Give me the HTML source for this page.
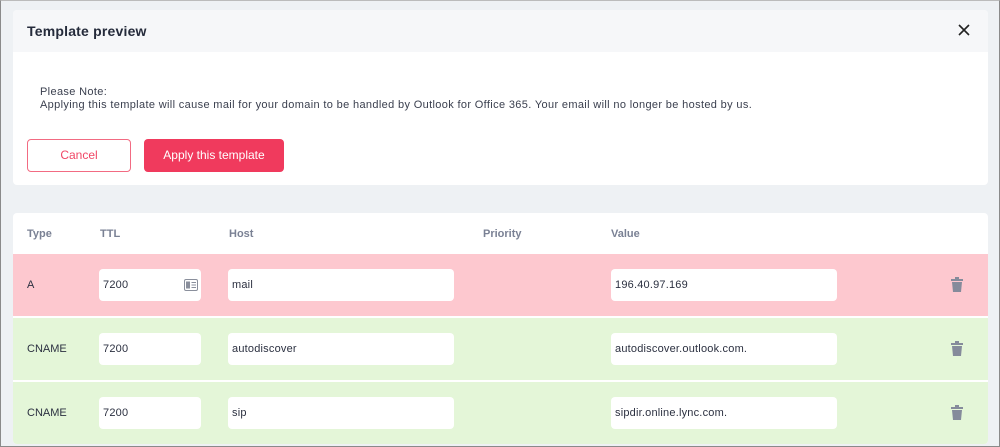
<!DOCTYPE html>
<html><head><style>
*{margin:0;padding:0;box-sizing:border-box}
html,body{width:1000px;height:447px;overflow:hidden}
body{background:#eef1f4;font-family:"Liberation Sans",sans-serif;position:relative;color:#2b3040}
.frame{position:absolute;left:0;top:0;width:1000px;height:447px;border:1px solid #8a8a8a;border-top-color:#bbb;z-index:5;pointer-events:none}
.abs{position:absolute}
.card1{left:13px;top:10px;width:975px;height:175px;background:#fff;border-radius:4px;overflow:hidden}
.hdr{height:42px;background:#f6f7f9;padding:13px 14px;font-weight:bold;font-size:14px;color:#252b3b;letter-spacing:.2px}
.note{position:absolute;left:40px;top:86px;font-size:11px;line-height:13px;color:#3a3f4e;letter-spacing:.35px}
.btn{position:absolute;top:139px;height:33px;border-radius:4px;font-size:12px;text-align:center;line-height:31px}
.card2{left:13px;top:213px;width:975px;height:231px;background:#fff;border-radius:4px;overflow:hidden}
.th{position:absolute;top:15px;font-size:11px;font-weight:bold;color:#7a8194}
.row{position:absolute;left:0;width:975px;height:62px}
.inp{position:absolute;top:15px;height:32px;background:#fff;border-radius:4px;font-size:11px;padding-left:4px;line-height:32px;color:#2b3040;letter-spacing:.2px}
.t{position:absolute;top:25px;left:14px;font-size:11px;color:#2b3040}
.tr{position:absolute;left:938px;top:23px}
</style></head><body>
<div class="frame"></div>
<div class="abs card1">
<div class="hdr">Template preview</div>
<svg class="abs" style="left:945px;top:14px" width="12" height="12" viewBox="0 0 12 12"><path d="M1 1L11 11M11 1L1 11" stroke="#222" stroke-width="1.6"/></svg>
</div>
<div class="note">Please Note:<br>Applying this template will cause mail for your domain to be handled by Outlook for Office 365. Your email will no longer be hosted by us.</div>
<div class="btn" style="left:27px;width:104px;border:1px solid #f26b82;color:#f04766;background:#fff">Cancel</div>
<div class="btn" style="left:144px;width:140px;background:#f03a5d;color:#fff;line-height:33px">Apply this template</div>
<div class="abs card2">
<div class="th" style="left:14px">Type</div>
<div class="th" style="left:87px">TTL</div>
<div class="th" style="left:216px">Host</div>
<div class="th" style="left:470px">Priority</div>
<div class="th" style="left:598px">Value</div>
<div class="row" style="top:41px;background:#fdc8cf">
<div class="t">A</div>
<div class="inp" style="left:86px;width:102px">7200
<svg class="abs" style="left:85px;top:10px" width="14" height="12" viewBox="0 0 14 12"><rect x="0.5" y="0.5" width="13" height="11" rx="1.5" fill="none" stroke="#8a8f9c"/><rect x="2" y="2.5" width="4" height="7" fill="#8a8f9c"/><path d="M7.5 3.5h4.5M7.5 6h4.5M7.5 8.5h4.5" stroke="#8a8f9c"/></svg></div>
<div class="inp" style="left:215px;width:226px">mail</div>
<div class="inp" style="left:598px;width:226px">196.40.97.169</div>
<svg class="tr" width="12" height="15" viewBox="0 0 12 15"><rect x="0" y="2" width="12" height="2" fill="#858b9b"/><rect x="4" y="0" width="4" height="2" fill="#858b9b"/><path d="M1 5h10l-1 10H2z" fill="#858b9b"/></svg>
</div>
<div class="row" style="top:105px;background:#e4f6d8">
<div class="t">CNAME</div>
<div class="inp" style="left:86px;width:102px">7200</div>
<div class="inp" style="left:215px;width:226px">autodiscover</div>
<div class="inp" style="left:598px;width:226px">autodiscover.outlook.com.</div>
<svg class="tr" width="12" height="15" viewBox="0 0 12 15"><rect x="0" y="2" width="12" height="2" fill="#858b9b"/><rect x="4" y="0" width="4" height="2" fill="#858b9b"/><path d="M1 5h10l-1 10H2z" fill="#858b9b"/></svg>
</div>
<div class="row" style="top:169px;background:#e4f6d8">
<div class="t">CNAME</div>
<div class="inp" style="left:86px;width:102px">7200</div>
<div class="inp" style="left:215px;width:226px">sip</div>
<div class="inp" style="left:598px;width:226px">sipdir.online.lync.com.</div>
<svg class="tr" width="12" height="15" viewBox="0 0 12 15"><rect x="0" y="2" width="12" height="2" fill="#858b9b"/><rect x="4" y="0" width="4" height="2" fill="#858b9b"/><path d="M1 5h10l-1 10H2z" fill="#858b9b"/></svg>
</div>
</div>
</body></html>
